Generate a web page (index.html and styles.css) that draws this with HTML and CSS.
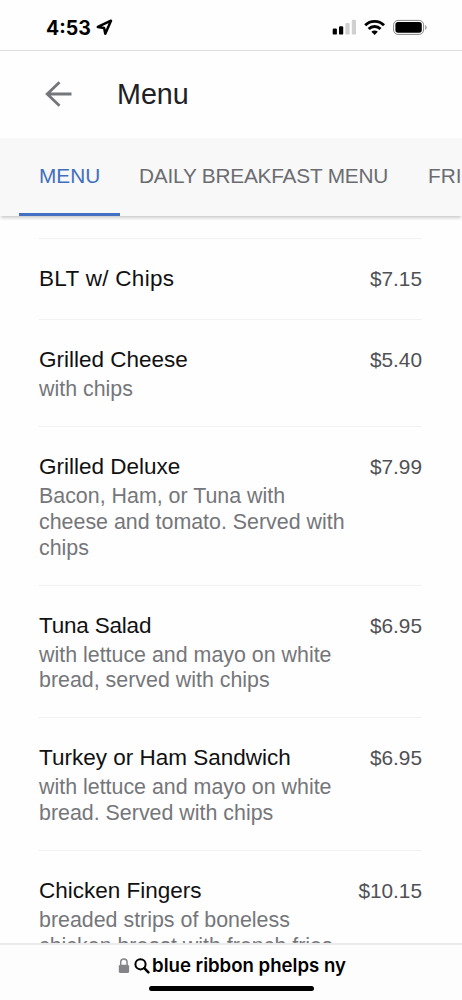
FILE: index.html
```html
<!DOCTYPE html>
<html lang="en">
<head>
<meta charset="utf-8">
<title>Menu</title>
<link rel="stylesheet" href="styles.css">
</head>
<body>
<div class="screen">
  <header class="status">
    <div class="clock"><span class="time">4:53</span>
      <svg class="location" width="17" height="17" viewBox="0 0 17 17"><path d="M1.8 7.9 15 1.7 9.3 14.8 8.1 8.9Z" fill="none" stroke="#000" stroke-width="2.5" stroke-linejoin="round"/></svg>
    </div>
    <svg width="96" height="18" viewBox="0 0 96 18">
      <g fill="#000"><rect x=".7" y="10.6" width="4.2" height="6" rx="1.2"/><rect x="7" y="8.2" width="4.2" height="8.4" rx="1.2"/></g>
      <g fill="#d0d0d0"><rect x="13.4" y="5" width="4.2" height="11.6" rx="1.2"/><rect x="19.8" y="1.8" width="4.2" height="14.8" rx="1.2"/></g>
      <g fill="none" stroke="#000" stroke-width="2.9"><path d="M33.2 7.3a13.3 13.3 0 0 1 18.8 0"/><path d="M36.7 11a8.3 8.3 0 0 1 11.8 0"/></g>
      <path d="M39.4 13.8a4.5 4.5 0 0 1 6.4 0L42.6 17Z"/>
      <rect x="61.6" y="2.4" width="30" height="14" rx="4.4" fill="none" stroke="#888"/>
      <rect x="63.4" y="4.1" width="26.4" height="10.6" rx="2.6"/>
      <path d="M93.1 7v5c2.1-.8 2.1-4.2 0-5Z" fill="#999"/>
    </svg>
  </header>
  <div class="appbar">
    <svg width="28" height="28" viewBox="0 0 28 28"><path d="M26.5 14H2M14.5 2.2 2.2 14l12.3 11.8" fill="none" stroke="#757679" stroke-width="2.8"/></svg>
    <h1 class="heading">Menu</h1>
  </div>
  <nav class="tabs">
    <span class="tab tab-active">MENU</span>
    <span class="tab tab-long">DAILY BREAKFAST MENU</span>
    <span class="tab">FRI</span>
  </nav>
  <main class="list">
    <section class="item"><div><h2 class="name wide">BLT w/ Chips</h2></div><span class="price">$7.15</span></section>
    <section class="item"><div><h2 class="name">Grilled Cheese</h2><p class="desc">with chips</p></div><span class="price">$5.40</span></section>
    <section class="item"><div><h2 class="name">Grilled Deluxe</h2><p class="desc">Bacon, Ham, or Tuna with<br>cheese and tomato. Served with<br>chips</p></div><span class="price">$7.99</span></section>
    <section class="item"><div><h2 class="name tight">Tuna Salad</h2><p class="desc">with lettuce and mayo on white<br>bread, served with chips</p></div><span class="price">$6.95</span></section>
    <section class="item"><div><h2 class="name">Turkey or Ham Sandwich</h2><p class="desc">with lettuce and mayo on white<br>bread. Served with chips</p></div><span class="price">$6.95</span></section>
    <section class="item"><div><h2 class="name">Chicken Fingers</h2><p class="desc">breaded strips of boneless<br>chicken breast with french fries</p></div><span class="price">$10.15</span></section>
  </main>
  <footer class="browser">
    <div class="address">
      <svg width="12" height="16" viewBox="0 0 12 16"><path d="M2.7 8V4.5a3.2 3.4 0 0 1 6.4 0V8" fill="none" stroke="#858588" stroke-width="1.5"/><rect x=".8" y="6.8" width="10.3" height="8.3" rx="1.5" fill="#858588"/></svg>
      <svg class="search" width="16" height="16" viewBox="0 0 16 16"><circle cx="6.5" cy="6.3" r="5.1" fill="none" stroke="#000" stroke-width="2"/><path d="m10.3 10.1 4.1 4.3" stroke="#000" stroke-width="2.5" stroke-linecap="round"/></svg>
      <span class="query">blue ribbon phelps ny</span>
    </div>
    <div class="home"></div>
  </footer>
</div>
</body>
</html>
```

FILE: styles.css
```css
* { box-sizing: border-box; }
body, h1, h2, p { margin: 0; font-weight: 400; }
body { background: #fefefe; font-family: "Liberation Sans", Arial, sans-serif; }
svg { display: block; flex: none; }
.screen { height: 1000px; display: flex; flex-direction: column; overflow: hidden; }
.status { height: 51px; flex: none; display: flex; justify-content: space-between; align-items: center; padding: 4px 34px 0 46px; border-bottom: 1px solid #dedede; }
.clock { display: flex; align-items: center; gap: 5px; }
.time { font: 700 19.5px/24px Inter, sans-serif; padding-top: 1px; }
.appbar { height: 87px; flex: none; display: flex; align-items: center; gap: 44px; padding: 0 0 1px 45px; }
.heading { font-size: 28.7px; line-height: 34px; padding-bottom: 1px; color: #202124; }
.tabs { height: 78px; flex: none; display: flex; padding-left: 19px; background: #f8f8f9; box-shadow: 0 3px 3px -1px rgba(0,0,0,.2); }
.tab { padding: 0 20px; line-height: 76px; font-size: 20.8px; color: #6b6c70; white-space: nowrap; }
.tab-active { width: 101px; color: #3f6fbe; border-bottom: 3px solid #4470c4; }
.tab-long { width: 288px; letter-spacing: -.2px; padding-left: 19px; }
.list { flex: 1; min-height: 0; overflow: hidden; padding: 21.9px 40px 0 39px; clip-path: inset(6px 0 0 0); }
.item { display: flex; justify-content: space-between; align-items: flex-start; border-top: 1px solid #f2f2f2; padding: 24px 0 25px; }
.name { font-size: 22.5px; line-height: 31px; color: #111; white-space: nowrap; }
.wide { letter-spacing: .3px; }
.tight { letter-spacing: -.2px; }
.desc { margin: 2px 0 -2px; font-size: 21.4px; line-height: 25.9px; color: #75767a; white-space: nowrap; }
.price { font-size: 20.8px; line-height: 31px; color: #505155; }
.browser { height: 57px; flex: none; display: flex; flex-direction: column; align-items: center; background: #fdfdfe; border-top: 2px solid #eaeaea; }
.address { height: 41px; display: flex; align-items: center; gap: 4px; padding-left: 2px; }
.search { margin-right: -2px; }
.query { font: 600 18.6px/24px Inter, sans-serif; white-space: nowrap; padding-bottom: 2px; }
.home { width: 165px; height: 5px; border-radius: 3px; background: #000; }
```
